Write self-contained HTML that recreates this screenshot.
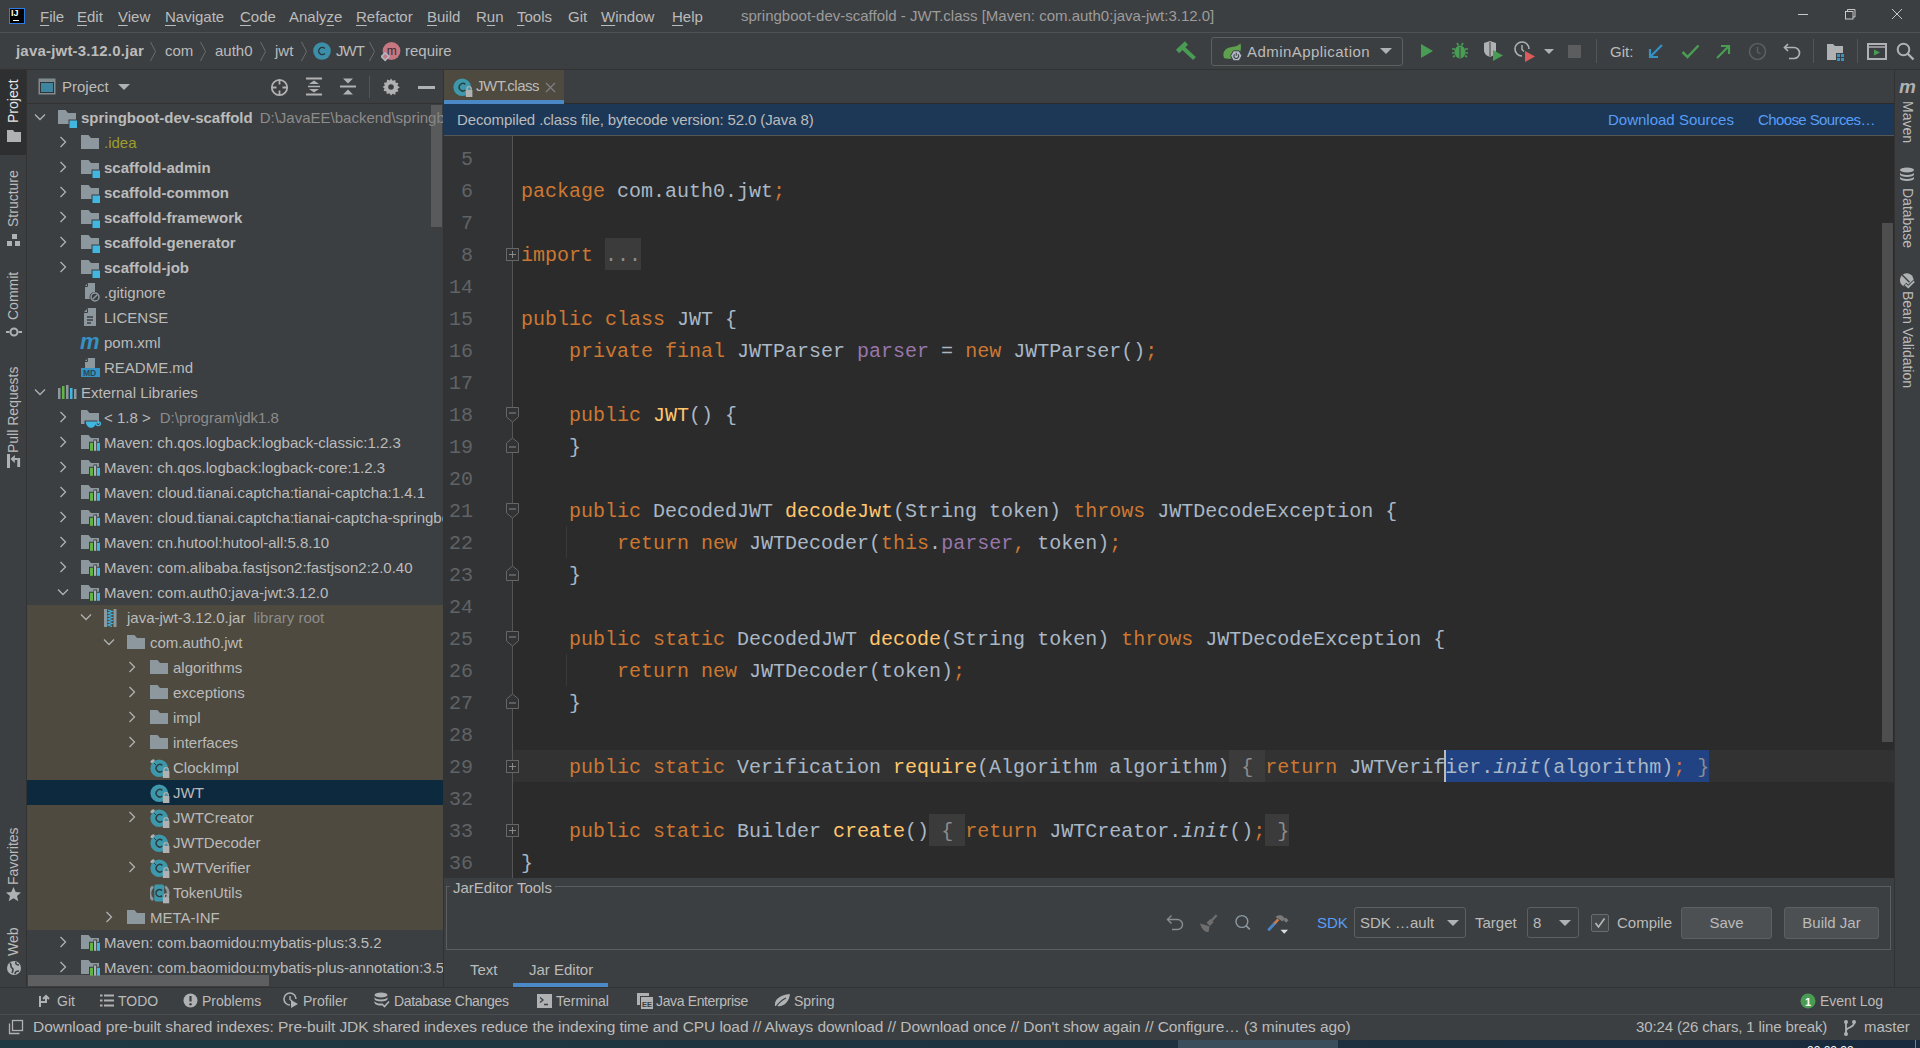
<!DOCTYPE html>
<html><head><meta charset="utf-8">
<style>
*{box-sizing:border-box;margin:0;padding:0}
html,body{width:1920px;height:1048px;overflow:hidden;background:#3C3F41}
body{position:relative;font-family:"Liberation Sans",sans-serif;font-size:15px;color:#BBBBBB}
.a{position:absolute;white-space:nowrap}
.ul{text-decoration:underline;text-underline-offset:3px}
.code{font-family:"Liberation Mono",monospace;font-size:20px;line-height:32px}
.k{color:#CC7832}.t{color:#A9B7C6}.f{color:#FFC66D}.v{color:#9876AA}.i{font-style:italic}
.ln{position:absolute;left:443px;width:30px;text-align:right;font-family:"Liberation Mono",monospace;font-size:20px;line-height:32px;color:#606366}
.cl{position:absolute;left:521px;font-family:"Liberation Mono",monospace;font-size:20px;line-height:32px;color:#A9B7C6;white-space:pre}
.tr{position:absolute;height:25px;line-height:25px;white-space:nowrap;color:#BBBBBB}
</style></head><body>

<!-- MENU BAR -->
<div class="a" style="left:0;top:0;width:1920px;height:33px;background:#3C3F41;border-bottom:1px solid #4E5254"></div>
<div class="a" style="left:9px;top:8px;width:16px;height:16px;background:#000;border:1px solid #2F7BE6"></div>
<div class="a" style="left:11px;top:7px;font-size:9px;font-weight:bold;color:#fff;line-height:12px">IJ</div>
<div class="a" style="left:13px;top:20px;width:6px;height:1px;background:#fff"></div>
<div id="menu">
<div class="a" style="left:40px;top:1px;line-height:32px"><span class="ul">F</span>ile</div>
<div class="a" style="left:77px;top:1px;line-height:32px"><span class="ul">E</span>dit</div>
<div class="a" style="left:118px;top:1px;line-height:32px"><span class="ul">V</span>iew</div>
<div class="a" style="left:165px;top:1px;line-height:32px"><span class="ul">N</span>avigate</div>
<div class="a" style="left:240px;top:1px;line-height:32px"><span class="ul">C</span>ode</div>
<div class="a" style="left:289px;top:1px;line-height:32px">Analy<span class="ul">z</span>e</div>
<div class="a" style="left:356px;top:1px;line-height:32px"><span class="ul">R</span>efactor</div>
<div class="a" style="left:427px;top:1px;line-height:32px"><span class="ul">B</span>uild</div>
<div class="a" style="left:476px;top:1px;line-height:32px">R<span class="ul">u</span>n</div>
<div class="a" style="left:517px;top:1px;line-height:32px"><span class="ul">T</span>ools</div>
<div class="a" style="left:568px;top:1px;line-height:32px">Git</div>
<div class="a" style="left:601px;top:1px;line-height:32px"><span class="ul">W</span>indow</div>
<div class="a" style="left:672px;top:1px;line-height:32px"><span class="ul">H</span>elp</div>
</div>
<div class="a" style="left:741px;top:0px;line-height:32px;color:#9C9C9C">springboot-dev-scaffold - JWT.class [Maven: com.auth0:java-jwt:3.12.0]</div>


<svg width="0" height="0" style="position:absolute">
<defs>
<symbol id="chr" viewBox="0 0 16 16"><polyline points="5.5,3 10.5,8 5.5,13" fill="none" stroke="#AFB1B3" stroke-width="1.3"/></symbol>
<symbol id="chd" viewBox="0 0 16 16"><polyline points="3,5.5 8,10.5 13,5.5" fill="none" stroke="#AFB1B3" stroke-width="1.3"/></symbol>
<symbol id="fold" viewBox="0 0 18 14"><path d="M0 0H7.5L10 3H18V14H0Z" fill="#8C979E"/></symbol>
<symbol id="modf" viewBox="0 0 20 18"><path d="M0 0H7.5L10 3H18V14H0Z" fill="#8C979E"/><rect x="10.5" y="9.5" width="9" height="9" fill="#3C3F41"/><rect x="11.5" y="10.5" width="7.5" height="7.5" fill="#40B6E0"/></symbol>
<symbol id="libf" viewBox="0 0 20 18"><path d="M0 0H7.5L10 3H18V14H0Z" fill="#8C979E"/><path d="M8 6.8H12.5V4.5H16V6.8H20V17H8Z" fill="#3C3F41"/><rect x="9" y="7.8" width="3" height="8" fill="#62B543"/><rect x="13" y="5.5" width="2.2" height="10.3" fill="#A7B3BA"/><rect x="16" y="7.8" width="3" height="8" fill="#40B6E0"/></symbol>
<symbol id="cls" viewBox="0 0 20 20"><circle cx="9.2" cy="9.2" r="8.8" fill="#3E98AB"/><path d="M12.3 6.4A3.7 3.7 0 1 0 12.3 12" fill="none" stroke="#2B3D42" stroke-width="1.5"/><path d="M14 12.3v-1.6a2.1 2.1 0 0 1 4.2 0v1.6" fill="none" stroke="#AFB1B3" stroke-width="1.3"/><rect x="12.9" y="12" width="6.5" height="7" fill="#AFB1B3"/></symbol>
<symbol id="clsa" viewBox="0 0 20 20"><circle cx="9.2" cy="9.2" r="8.8" fill="#3E98AB"/><ellipse cx="2.6" cy="2.2" rx="2.4" ry="1.5" transform="rotate(-40 2.6 2.2)" fill="#AFB1B3"/><path d="M4.2 4.2L6.2 6.2" stroke="#2B3D42" stroke-width="1"/><path d="M12.3 6.4A3.7 3.7 0 1 0 12.3 12" fill="none" stroke="#2B3D42" stroke-width="1.5"/><rect x="11.6" y="11" width="8.4" height="9" fill="#3E98AB" opacity="0"/><path d="M14 12.3v-1.6a2.1 2.1 0 0 1 4.2 0v1.6" fill="none" stroke="#AFB1B3" stroke-width="1.3"/><rect x="12.9" y="12" width="6.5" height="7" fill="#AFB1B3"/></symbol>
</defs></svg>

<!-- NAV BAR -->
<div class="a" style="left:0;top:33px;width:1920px;height:37px;background:#3C3F41;border-bottom:1px solid #323232"></div>
<div class="a" style="left:16px;top:33px;line-height:35px;font-weight:bold;letter-spacing:0.2px">java-jwt-3.12.0.jar</div>
<svg class="a" style="left:147px;top:41px" width="12" height="21"><polyline points="3.5,1 8.5,10.5 3.5,20" fill="none" stroke="#6A6C6E" stroke-width="1"/></svg>
<div class="a" style="left:165px;top:33px;line-height:35px">com</div>
<svg class="a" style="left:197px;top:41px" width="12" height="21"><polyline points="3.5,1 8.5,10.5 3.5,20" fill="none" stroke="#6A6C6E" stroke-width="1"/></svg>
<div class="a" style="left:215px;top:33px;line-height:35px">auth0</div>
<svg class="a" style="left:257px;top:41px" width="12" height="21"><polyline points="3.5,1 8.5,10.5 3.5,20" fill="none" stroke="#6A6C6E" stroke-width="1"/></svg>
<div class="a" style="left:275px;top:33px;line-height:35px">jwt</div>
<svg class="a" style="left:298px;top:41px" width="12" height="21"><polyline points="3.5,1 8.5,10.5 3.5,20" fill="none" stroke="#6A6C6E" stroke-width="1"/></svg>
<svg class="a" style="left:313px;top:42px" width="18" height="18"><circle cx="9" cy="9" r="8.8" fill="#3D8EA8"/><path d="M11.8 6.4A3.6 3.6 0 1 0 11.8 11.6" fill="none" stroke="#273A40" stroke-width="1.4"/></svg>
<div class="a" style="left:336px;top:33px;line-height:35px;letter-spacing:-0.9px">JWT</div>
<svg class="a" style="left:366px;top:41px" width="12" height="21"><polyline points="3.5,1 8.5,10.5 3.5,20" fill="none" stroke="#6A6C6E" stroke-width="1"/></svg>
<svg class="a" style="left:381px;top:41px" width="21" height="21"><circle cx="10.5" cy="10" r="8.9" fill="#C57782"/><text x="10.8" y="14.2" font-size="12" text-anchor="middle" fill="#3A2A2E" font-family="Liberation Sans">m</text><path d="M4.2 11.8L8 15.6L4.2 19.4L0.4 15.6Z" fill="#C57782" stroke="#AFB9C3" stroke-width="1.6"/></svg>
<div class="a" style="left:405px;top:33px;line-height:35px">require</div>


<div class="a" style="left:1798px;top:14px;width:10px;height:1px;background:#C8C8C8"></div>
<svg class="a" style="left:1844px;top:8px" width="14" height="14"><rect x="1.5" y="3.5" width="7.5" height="7.5" fill="none" stroke="#C8C8C8" stroke-width="1"/><path d="M3.5 3.5V1.5H11V9H9" fill="none" stroke="#C8C8C8" stroke-width="1"/></svg>
<svg class="a" style="left:1891px;top:8px" width="12" height="12"><path d="M1 1L11 11M11 1L1 11" stroke="#C8C8C8" stroke-width="1"/></svg>
<svg class="a" style="left:1174px;top:40px" width="22" height="22"><path d="M3.5 11.5L12.5 3" stroke="#499C54" stroke-width="4.5"/><path d="M8 7L20.5 18.5" stroke="#499C54" stroke-width="4"/></svg>
<div class="a" style="left:1211px;top:37px;width:192px;height:29px;border:1px solid #5E6060;border-radius:3px"></div>
<svg class="a" style="left:1222px;top:42px" width="22" height="20"><path d="M2 16C0 10 3 6 10 5C14 4.5 17 3 18.5 1.5C19.5 6 19 11 15 14C11 17 5 17.5 2 16Z" fill="#5FA04E"/><path d="M19.9 13.8L17.1 18.8H11.4L8.6 13.8L11.4 8.8H17.1Z" fill="#AFB9C3" stroke="#3C3F41" stroke-width="1"/><path d="M12.6 12.3A2.4 2.4 0 1 0 15.9 12.3" fill="none" stroke="#3C3F41" stroke-width="1.1"/><path d="M14.25 10.8V13.8" stroke="#3C3F41" stroke-width="1.1"/></svg>
<div class="a" style="left:1247px;top:37px;line-height:29px;letter-spacing:0.45px;color:#BBBBBB">AdminApplication</div>
<svg class="a" style="left:1379px;top:47px" width="14" height="9"><path d="M1 1H13L7 7Z" fill="#AFB1B3"/></svg>
<svg class="a" style="left:1419px;top:42px" width="16" height="18"><path d="M2 2L14 9L2 16Z" fill="#499C54"/></svg>
<svg class="a" style="left:1451px;top:41px" width="18" height="19"><path d="M6 2L7.5 4.5M12 2L10.5 4.5" stroke="#499C54" stroke-width="1.6"/><ellipse cx="9" cy="11" rx="5.5" ry="6.5" fill="#499C54"/><path d="M1 8H4M14 8H17M1 12H3.5M14.5 12H17M2 16L4 14.5M16 16L14 14.5" stroke="#499C54" stroke-width="1.6"/><path d="M9 6V17" stroke="#3C3F41" stroke-width="1"/></svg>
<svg class="a" style="left:1483px;top:41px" width="22" height="21"><path d="M1 2L7 0L13 2V9C13 13 10 15 7 16C4 15 1 13 1 9Z" fill="#AFB1B3"/><path d="M7 1V15.5" stroke="#3C3F41" stroke-width="1"/><path d="M10 9L20 14.5L10 20Z" fill="#499C54"/></svg>
<svg class="a" style="left:1514px;top:41px" width="22" height="21"><path d="M8 15A7 7 0 1 1 15 8" fill="none" stroke="#AFB1B3" stroke-width="1.6"/><path d="M8 4V8.5L10 10.5" fill="none" stroke="#AFB1B3" stroke-width="1.4"/><path d="M11 10L21 15.5L11 21Z" fill="#DB5C5C"/></svg>
<svg class="a" style="left:1543px;top:48px" width="12" height="8"><path d="M1 1H11L6 6Z" fill="#AFB1B3"/></svg>
<div class="a" style="left:1568px;top:45px;width:13px;height:13px;background:#5B5D5F"></div>
<div class="a" style="left:1596px;top:39px;width:1px;height:24px;background:#515658"></div>
<div class="a" style="left:1610px;top:37px;line-height:29px;color:#BBBBBB">Git:</div>
<svg class="a" style="left:1647px;top:43px" width="17" height="17"><path d="M15 2L3 14M3 6V14H11" fill="none" stroke="#3592C4" stroke-width="2.2"/></svg>
<svg class="a" style="left:1681px;top:43px" width="19" height="17"><path d="M1.5 9L6.5 14L17.5 2.5" fill="none" stroke="#499C54" stroke-width="2.5"/></svg>
<svg class="a" style="left:1715px;top:43px" width="17" height="17"><path d="M2 15L14 3M6 3H14V11" fill="none" stroke="#499C54" stroke-width="2.2"/></svg>
<svg class="a" style="left:1748px;top:42px" width="19" height="19"><circle cx="9.5" cy="9.5" r="8" fill="none" stroke="#5B5D5F" stroke-width="1.6"/><path d="M9.5 5V10L12.5 12" fill="none" stroke="#5B5D5F" stroke-width="1.5"/></svg>
<svg class="a" style="left:1783px;top:42px" width="19" height="19"><path d="M5 2L1.5 5.5L5 9" fill="none" stroke="#AFB1B3" stroke-width="1.7"/><path d="M2 5.5H11A5.5 5.5 0 0 1 11 16.5H6" fill="none" stroke="#AFB1B3" stroke-width="1.7"/></svg>
<div class="a" style="left:1813px;top:39px;width:1px;height:24px;background:#515658"></div>
<svg class="a" style="left:1826px;top:43px" width="20" height="18"><path d="M1 1H7L9 3H17V10H10V17H1Z" fill="#AFB1B3"/><rect x="11" y="11" width="3" height="3" fill="#3592C4"/><rect x="15" y="11" width="3" height="3" fill="#3592C4"/><rect x="11" y="15" width="3" height="3" fill="#3592C4"/><rect x="15" y="15" width="3" height="3" fill="#3592C4"/></svg>
<div class="a" style="left:1857px;top:39px;width:1px;height:24px;background:#515658"></div>
<svg class="a" style="left:1867px;top:43px" width="20" height="17"><rect x="1" y="1" width="18" height="15" fill="none" stroke="#AFB1B3" stroke-width="2"/><path d="M1 4H19" stroke="#AFB1B3" stroke-width="1.5"/><path d="M7 6.5L13 9.5L7 12.5Z" fill="#499C54"/></svg>
<svg class="a" style="left:1896px;top:42px" width="19" height="19"><circle cx="7.5" cy="7.5" r="5.8" fill="none" stroke="#AFB1B3" stroke-width="2"/><path d="M11.5 11.5L17.5 17.5" stroke="#AFB1B3" stroke-width="2.4"/></svg>
<div class="a" style="left:0;top:70px;width:27px;height:917px;background:#3C3F41;border-right:1px solid #323232"></div>
<div class="a" style="left:0;top:70px;width:26px;height:85px;background:#2D2F30"></div>
<div class="a" style="left:5px;top:123px;transform-origin:0 0;transform:rotate(-90deg);font-size:14px;line-height:16px;color:#E6E6E6">Project</div>
<svg class="a" style="left:6px;top:128px" width="16" height="16"><path d="M1 2H7L8.5 4H15V14H1Z" fill="#AFB1B3"/></svg>
<div class="a" style="left:5px;top:227px;transform-origin:0 0;transform:rotate(-90deg);font-size:14px;line-height:16px;color:#BBBBBB">Structure</div>
<svg class="a" style="left:6px;top:232px" width="16" height="16"><rect x="6" y="2" width="5" height="5" fill="#AFB1B3"/><rect x="1" y="9" width="5" height="5" fill="#AFB1B3"/><rect x="9" y="9" width="5" height="5" fill="#AFB1B3"/></svg>
<div class="a" style="left:5px;top:320px;transform-origin:0 0;transform:rotate(-90deg);font-size:14px;line-height:16px;color:#BBBBBB">Commit</div>
<svg class="a" style="left:6px;top:324px" width="16" height="16"><circle cx="8" cy="8" r="3.5" fill="none" stroke="#AFB1B3" stroke-width="2"/><rect x="0" y="7" width="3.5" height="2" fill="#AFB1B3"/><rect x="12.5" y="7" width="3.5" height="2" fill="#AFB1B3"/></svg>
<div class="a" style="left:5px;top:453px;transform-origin:0 0;transform:rotate(-90deg);font-size:14px;line-height:16px;color:#BBBBBB">Pull Requests</div>
<svg class="a" style="left:0;top:450px" width="26" height="22"><rect x="7" y="4" width="3" height="14" fill="#AFB1B3"/><path d="M10.5 9L14.8 5V13Z" fill="#AFB1B3"/><rect x="14.5" y="8" width="3" height="2" fill="#AFB1B3"/><rect x="17.3" y="8" width="2.8" height="9" fill="#AFB1B3"/></svg>
<div class="a" style="left:5px;top:885px;transform-origin:0 0;transform:rotate(-90deg);font-size:14px;line-height:16px;color:#BBBBBB">Favorites</div>
<svg class="a" style="left:5px;top:886px" width="17" height="17"><path d="M8.5 1l2.2 5 5.3.4-4 3.5 1.3 5.3-4.8-2.9-4.8 2.9 1.3-5.3-4-3.5 5.3-.4z" fill="#AFB1B3"/></svg>
<div class="a" style="left:5px;top:956px;transform-origin:0 0;transform:rotate(-90deg);font-size:14px;line-height:16px;color:#BBBBBB">Web</div>
<svg class="a" style="left:6px;top:960px" width="16" height="16"><circle cx="8" cy="8" r="7" fill="#AFB1B3"/><path d="M4 3c2 2 0 4 2 5s1 3 0 5M10 2c-1 2 1 3 3 3M9 14c0-2 2-3 4-3" fill="none" stroke="#3C3F41" stroke-width="1.6"/></svg>
<div class="a" style="left:27px;top:70px;width:416px;height:34px;background:#3C3F41;border-bottom:1px solid #323232"></div>
<svg class="a" style="left:38px;top:78px" width="18" height="17"><rect x="0.5" y="0.5" width="17" height="16" fill="#7F8B91"/><rect x="2" y="4" width="14" height="11" fill="#2F3436"/><rect x="3" y="5" width="12" height="9" fill="#3E86A0"/></svg>
<div class="a" style="left:62px;top:70px;line-height:33px;font-size:15px">Project</div>
<svg class="a" style="left:117px;top:82px" width="14" height="10"><path d="M1 2H13L7 8Z" fill="#AFB1B3"/></svg>
<svg class="a" style="left:270px;top:78px" width="19" height="19"><circle cx="9.5" cy="9.5" r="7.7" fill="none" stroke="#AFB1B3" stroke-width="1.8"/><path d="M9.5 2v4.5M9.5 12.5v4.5M2 9.5h4.5M12.5 9.5h4.5" stroke="#AFB1B3" stroke-width="1.8"/></svg>
<svg class="a" style="left:305px;top:77px" width="18" height="19"><path d="M1 1.5H17M1 17.5H17" stroke="#AFB1B3" stroke-width="2"/><path d="M4 7L9 3.5L14 7ZM4 12L9 15.5L14 12Z" fill="#AFB1B3"/><path d="M3 9.5H15" stroke="#AFB1B3" stroke-width="1.5"/></svg>
<svg class="a" style="left:339px;top:77px" width="18" height="19"><path d="M1 9.5H17" stroke="#AFB1B3" stroke-width="2"/><path d="M4 1.5L9 6.5L14 1.5ZM4 17.5L9 12.5L14 17.5Z" fill="#AFB1B3"/></svg>
<div class="a" style="left:369px;top:76px;width:1px;height:22px;background:#515658"></div>
<svg class="a" style="left:382px;top:78px" width="18" height="18"><path d="M9 0.5l1.6 2.3 2.7-.9.3 2.8 2.8.3-.9 2.7 2.3 1.6-2.3 1.6.9 2.7-2.8.3-.3 2.8-2.7-.9L9 17.5l-1.6-2.3-2.7.9-.3-2.8-2.8-.3.9-2.7L.5 9l2.3-1.6-.9-2.7 2.8-.3.3-2.8 2.7.9z" fill="#AFB1B3"/><circle cx="9" cy="9" r="2.8" fill="#3C3F41"/></svg>
<div class="a" style="left:418px;top:86px;width:17px;height:3px;background:#AFB1B3"></div>
<div class="a" style="left:27px;top:104px;width:416px;height:883px;background:#3C3F41"></div>
<div class="a" style="left:27px;top:605px;width:416px;height:325px;background:#4E4A3F"></div>
<div class="a" style="left:27px;top:780px;width:416px;height:25px;background:#0D293E"></div>
<div style="position:absolute;left:0;top:0;width:443px;height:987px;overflow:hidden">
<svg class="a" style="left:32px;top:109px" width="16" height="16"><use href="#chd"/></svg>
<svg class="a" style="left:58px;top:110px" width="20" height="18"><use href="#modf"/></svg>
<div class="tr" style="left:81px;top:105px;font-weight:bold">springboot-dev-scaffold<span style="font-weight:normal;color:#8C8C8C;margin-left:7px">D:\JavaEE\backend\springboot-dev-scaffold</span></div>
<svg class="a" style="left:55px;top:134px" width="16" height="16"><use href="#chr"/></svg>
<svg class="a" style="left:81px;top:135px" width="18" height="14"><use href="#fold"/></svg>
<div class="tr" style="left:104px;top:130px;color:#9E9D2C">.idea</div>
<svg class="a" style="left:55px;top:159px" width="16" height="16"><use href="#chr"/></svg>
<svg class="a" style="left:81px;top:160px" width="20" height="18"><use href="#modf"/></svg>
<div class="tr" style="left:104px;top:155px;font-weight:bold">scaffold-admin</div>
<svg class="a" style="left:55px;top:184px" width="16" height="16"><use href="#chr"/></svg>
<svg class="a" style="left:81px;top:185px" width="20" height="18"><use href="#modf"/></svg>
<div class="tr" style="left:104px;top:180px;font-weight:bold">scaffold-common</div>
<svg class="a" style="left:55px;top:209px" width="16" height="16"><use href="#chr"/></svg>
<svg class="a" style="left:81px;top:210px" width="20" height="18"><use href="#modf"/></svg>
<div class="tr" style="left:104px;top:205px;font-weight:bold">scaffold-framework</div>
<svg class="a" style="left:55px;top:234px" width="16" height="16"><use href="#chr"/></svg>
<svg class="a" style="left:81px;top:235px" width="20" height="18"><use href="#modf"/></svg>
<div class="tr" style="left:104px;top:230px;font-weight:bold">scaffold-generator</div>
<svg class="a" style="left:55px;top:259px" width="16" height="16"><use href="#chr"/></svg>
<svg class="a" style="left:81px;top:260px" width="20" height="18"><use href="#modf"/></svg>
<div class="tr" style="left:104px;top:255px;font-weight:bold">scaffold-job</div>
<svg class="a" style="left:83px;top:283px" width="18" height="19"><path d="M2 3L5 0H12V9A5 5 0 0 0 7 16H2Z" fill="#8C979E"/><path d="M4.5 0.5V3.5H1.5" fill="none" stroke="#3C3F41" stroke-width="1"/><circle cx="12" cy="14" r="4" fill="none" stroke="#8C979E" stroke-width="1.5"/><path d="M9.5 16.5L14.5 11.5" stroke="#8C979E" stroke-width="1.5"/></svg>
<div class="tr" style="left:104px;top:280px">.gitignore</div>
<svg class="a" style="left:83px;top:308px" width="16" height="19"><path d="M1 4L5 0H13V18H1Z" fill="#8C979E"/><path d="M4.5 0.5V4.5H0.5" fill="none" stroke="#3C3F41" stroke-width="1"/><path d="M4 9H10M4 12H10M4 15H8" stroke="#3C3F41" stroke-width="1.3"/></svg>
<div class="tr" style="left:104px;top:305px">LICENSE</div>
<div class="a" style="left:80px;top:329px;font-size:22px;line-height:25px;font-weight:bold;font-style:italic;color:#3592C4;font-family:&quot;Liberation Sans&quot;">m</div>
<div class="tr" style="left:104px;top:330px">pom.xml</div>
<svg class="a" style="left:81px;top:358px" width="20" height="19"><path d="M4 3L7 0H14V10H4Z" fill="#8C979E"/><path d="M6.5 0.5V3.5H3.5" fill="none" stroke="#3C3F41" stroke-width="1"/><rect x="0" y="10" width="19" height="9" fill="#3592C4"/><text x="2" y="18" font-size="8.5" font-weight="bold" fill="#2B4656" font-family="Liberation Sans">MD</text></svg>
<div class="tr" style="left:104px;top:355px">README.md</div>
<svg class="a" style="left:32px;top:384px" width="16" height="16"><use href="#chd"/></svg>
<svg class="a" style="left:58px;top:385px" width="20" height="16"><rect x="0" y="3" width="2.5" height="11" fill="#8C979E"/><rect x="4" y="1" width="2.5" height="13" fill="#62B543"/><rect x="8" y="0" width="2.5" height="14" fill="#8C979E"/><rect x="12" y="3" width="2.5" height="11" fill="#40B6E0"/><rect x="16" y="4" width="2.5" height="10" fill="#8C979E"/></svg>
<div class="tr" style="left:81px;top:380px">External Libraries</div>
<svg class="a" style="left:55px;top:409px" width="16" height="16"><use href="#chr"/></svg>
<svg class="a" style="left:81px;top:410px" width="22" height="19"><path d="M0 0H6L8.5 3H18V14H0Z" fill="#8C979E"/><path d="M3.5 10.5H16.5V15H3.5Z" fill="#3C3F41"/><path d="M4.8 11.5H15.2C15 15.5 12.5 17.8 10 17.8C7.5 17.8 5 15.5 4.8 11.5Z" fill="#40B6E0"/><ellipse cx="17.2" cy="13.8" rx="2.3" ry="1.8" fill="none" stroke="#40B6E0" stroke-width="1.3"/></svg>
<div class="tr" style="left:104px;top:405px">&lt; 1.8 &gt;<span style="color:#8C8C8C;margin-left:9px">D:\program\jdk1.8</span></div>
<svg class="a" style="left:55px;top:434px" width="16" height="16"><use href="#chr"/></svg>
<svg class="a" style="left:81px;top:435px" width="20" height="18"><use href="#libf"/></svg>
<div class="tr" style="left:104px;top:430px">Maven: ch.qos.logback:logback-classic:1.2.3</div>
<svg class="a" style="left:55px;top:459px" width="16" height="16"><use href="#chr"/></svg>
<svg class="a" style="left:81px;top:460px" width="20" height="18"><use href="#libf"/></svg>
<div class="tr" style="left:104px;top:455px">Maven: ch.qos.logback:logback-core:1.2.3</div>
<svg class="a" style="left:55px;top:484px" width="16" height="16"><use href="#chr"/></svg>
<svg class="a" style="left:81px;top:485px" width="20" height="18"><use href="#libf"/></svg>
<div class="tr" style="left:104px;top:480px">Maven: cloud.tianai.captcha:tianai-captcha:1.4.1</div>
<svg class="a" style="left:55px;top:509px" width="16" height="16"><use href="#chr"/></svg>
<svg class="a" style="left:81px;top:510px" width="20" height="18"><use href="#libf"/></svg>
<div class="tr" style="left:104px;top:505px">Maven: cloud.tianai.captcha:tianai-captcha-springboot-starter:1.4.1</div>
<svg class="a" style="left:55px;top:534px" width="16" height="16"><use href="#chr"/></svg>
<svg class="a" style="left:81px;top:535px" width="20" height="18"><use href="#libf"/></svg>
<div class="tr" style="left:104px;top:530px">Maven: cn.hutool:hutool-all:5.8.10</div>
<svg class="a" style="left:55px;top:559px" width="16" height="16"><use href="#chr"/></svg>
<svg class="a" style="left:81px;top:560px" width="20" height="18"><use href="#libf"/></svg>
<div class="tr" style="left:104px;top:555px">Maven: com.alibaba.fastjson2:fastjson2:2.0.40</div>
<svg class="a" style="left:55px;top:584px" width="16" height="16"><use href="#chd"/></svg>
<svg class="a" style="left:81px;top:585px" width="20" height="18"><use href="#libf"/></svg>
<div class="tr" style="left:104px;top:580px">Maven: com.auth0:java-jwt:3.12.0</div>
<svg class="a" style="left:78px;top:609px" width="16" height="16"><use href="#chd"/></svg>
<svg class="a" style="left:104px;top:609px" width="14" height="18"><rect x="0" y="0" width="3" height="18" fill="#8C979E"/><rect x="9.5" y="0" width="3" height="18" fill="#8C979E"/><polyline points="4,1 8,2.5 4,4 8,5.5 4,7 8,8.5 4,10 8,11.5 4,13 8,14.5 4,16 8,17.5" fill="none" stroke="#40B6E0" stroke-width="1.2"/></svg>
<div class="tr" style="left:127px;top:605px">java-jwt-3.12.0.jar<span style="color:#8C8C8C;margin-left:8px">library root</span></div>
<svg class="a" style="left:101px;top:634px" width="16" height="16"><use href="#chd"/></svg>
<svg class="a" style="left:127px;top:635px" width="18" height="14"><use href="#fold"/></svg>
<div class="tr" style="left:150px;top:630px">com.auth0.jwt</div>
<svg class="a" style="left:124px;top:659px" width="16" height="16"><use href="#chr"/></svg>
<svg class="a" style="left:150px;top:660px" width="18" height="14"><use href="#fold"/></svg>
<div class="tr" style="left:173px;top:655px">algorithms</div>
<svg class="a" style="left:124px;top:684px" width="16" height="16"><use href="#chr"/></svg>
<svg class="a" style="left:150px;top:685px" width="18" height="14"><use href="#fold"/></svg>
<div class="tr" style="left:173px;top:680px">exceptions</div>
<svg class="a" style="left:124px;top:709px" width="16" height="16"><use href="#chr"/></svg>
<svg class="a" style="left:150px;top:710px" width="18" height="14"><use href="#fold"/></svg>
<div class="tr" style="left:173px;top:705px">impl</div>
<svg class="a" style="left:124px;top:734px" width="16" height="16"><use href="#chr"/></svg>
<svg class="a" style="left:150px;top:735px" width="18" height="14"><use href="#fold"/></svg>
<div class="tr" style="left:173px;top:730px">interfaces</div>
<svg class="a" style="left:150px;top:759px" width="20" height="20"><use href="#clsa"/></svg>
<div class="tr" style="left:173px;top:755px">ClockImpl</div>
<svg class="a" style="left:150px;top:784px" width="20" height="20"><use href="#cls"/></svg>
<div class="tr" style="left:173px;top:780px">JWT</div>
<svg class="a" style="left:124px;top:809px" width="16" height="16"><use href="#chr"/></svg>
<svg class="a" style="left:150px;top:809px" width="20" height="20"><use href="#clsa"/></svg>
<div class="tr" style="left:173px;top:805px">JWTCreator</div>
<svg class="a" style="left:150px;top:834px" width="20" height="20"><use href="#clsa"/></svg>
<div class="tr" style="left:173px;top:830px">JWTDecoder</div>
<svg class="a" style="left:124px;top:859px" width="16" height="16"><use href="#chr"/></svg>
<svg class="a" style="left:150px;top:859px" width="20" height="20"><use href="#clsa"/></svg>
<div class="tr" style="left:173px;top:855px">JWTVerifier</div>
<svg class="a" style="left:150px;top:884px" width="20" height="20"><path d="M3 2.5A9 9 0 0 0 3 16M15.2 2.5A9 9 0 0 1 15.2 16" fill="none" stroke="#8C979E" stroke-width="2.6"/><rect x="4.3" y="0.5" width="9.8" height="17" rx="1.8" fill="#3E98AB"/><path d="M12 6.6A3.5 3.5 0 1 0 12 11.6" fill="none" stroke="#2B3D42" stroke-width="1.5"/><path d="M14.2 13.5v-1.6a2 2 0 0 1 4 0v1.6" fill="none" stroke="#AFB1B3" stroke-width="1.3"/><rect x="13" y="13.3" width="6.2" height="6" fill="#AFB1B3"/></svg>
<div class="tr" style="left:173px;top:880px">TokenUtils</div>
<svg class="a" style="left:101px;top:909px" width="16" height="16"><use href="#chr"/></svg>
<svg class="a" style="left:127px;top:910px" width="18" height="14"><use href="#fold"/></svg>
<div class="tr" style="left:150px;top:905px">META-INF</div>
<svg class="a" style="left:55px;top:934px" width="16" height="16"><use href="#chr"/></svg>
<svg class="a" style="left:81px;top:935px" width="20" height="18"><use href="#libf"/></svg>
<div class="tr" style="left:104px;top:930px">Maven: com.baomidou:mybatis-plus:3.5.2</div>
<svg class="a" style="left:55px;top:959px" width="16" height="16"><use href="#chr"/></svg>
<svg class="a" style="left:81px;top:960px" width="20" height="18"><use href="#libf"/></svg>
<div class="tr" style="left:104px;top:955px">Maven: com.baomidou:mybatis-plus-annotation:3.5.2</div>
</div>
<div class="a" style="left:431px;top:105px;width:11px;height:122px;background:rgba(125,125,125,0.45)"></div>
<div class="a" style="left:443px;top:70px;width:1px;height:917px;background:#323232"></div>
<div class="a" style="left:444px;top:70px;width:1450px;height:34px;background:#3C3F41"></div>
<div class="a" style="left:444px;top:103px;width:1450px;height:1px;background:#2B2B2B"></div>
<div class="a" style="left:444px;top:70px;width:120px;height:30px;background:#4E4A3F"></div>
<div class="a" style="left:444px;top:100px;width:120px;height:4px;background:#4A88C7"></div>
<svg class="a" style="left:453px;top:78px" width="20" height="20"><use href="#cls"/></svg>
<div class="a" style="left:476px;top:70px;line-height:31px;letter-spacing:-0.5px;color:#BBBBBB">JWT.class</div>
<svg class="a" style="left:545px;top:82px" width="11" height="11"><path d="M1 1L10 10M10 1L1 10" stroke="#7E8183" stroke-width="1.2"/></svg>
<div class="a" style="left:444px;top:104px;width:1450px;height:31px;background:#1D3857"></div>
<div class="a" style="left:444px;top:135px;width:1450px;height:1px;background:#555555"></div>
<div class="a" style="left:457px;top:104px;line-height:31px;letter-spacing:-0.11px;color:#BBBBBB">Decompiled .class file, bytecode version: 52.0 (Java 8)</div>
<div class="a" style="left:1608px;top:104px;line-height:31px;color:#589DF6">Download Sources</div>
<div class="a" style="left:1758px;top:104px;line-height:31px;letter-spacing:-0.6px;color:#589DF6">Choose Sources…</div>
<div class="a" style="left:444px;top:136px;width:1450px;height:742px;background:#2B2B2B"></div>
<div class="a" style="left:444px;top:136px;width:69px;height:742px;background:#313335"></div>
<div class="a" style="left:513px;top:750px;width:1381px;height:32px;background:#323232"></div>
<div class="a" style="left:512px;top:136px;width:1px;height:742px;background:#555555"></div>
<div class="a" style="left:566px;top:526px;width:1px;height:32px;background:#393B3B"></div>
<div class="a" style="left:566px;top:654px;width:1px;height:32px;background:#393B3B"></div>
<div class="a" style="left:1882px;top:223px;width:11px;height:519px;background:#4E4E4E"></div>
<div class="ln" style="top:144px">5</div>
<div class="ln" style="top:176px">6</div>
<div class="cl" style="top:176px"><span style="color:#CC7832">package</span><span style="color:#A9B7C6"> com.auth0.jwt</span><span style="color:#CC7832">;</span></div>
<div class="ln" style="top:208px">7</div>
<div class="ln" style="top:240px">8</div>
<div class="a" style="left:605px;top:238px;width:36px;height:32px;background:#3B3B3B"></div>
<div class="cl" style="top:240px"><span style="color:#CC7832">import</span><span style="color:#A9B7C6"> </span><span style="color:#8C8C8C">...</span></div>
<div class="ln" style="top:272px">14</div>
<div class="ln" style="top:304px">15</div>
<div class="cl" style="top:304px"><span style="color:#CC7832">public</span><span style="color:#A9B7C6"> </span><span style="color:#CC7832">class</span><span style="color:#A9B7C6"> JWT {</span></div>
<div class="ln" style="top:336px">16</div>
<div class="cl" style="top:336px"><span style="color:#A9B7C6">    </span><span style="color:#CC7832">private</span><span style="color:#A9B7C6"> </span><span style="color:#CC7832">final</span><span style="color:#A9B7C6"> JWTParser </span><span style="color:#9876AA">parser</span><span style="color:#A9B7C6"> = </span><span style="color:#CC7832">new</span><span style="color:#A9B7C6"> JWTParser()</span><span style="color:#CC7832">;</span></div>
<div class="ln" style="top:368px">17</div>
<div class="ln" style="top:400px">18</div>
<div class="cl" style="top:400px"><span style="color:#A9B7C6">    </span><span style="color:#CC7832">public</span><span style="color:#A9B7C6"> </span><span style="color:#FFC66D">JWT</span><span style="color:#A9B7C6">() {</span></div>
<div class="ln" style="top:432px">19</div>
<div class="cl" style="top:432px"><span style="color:#A9B7C6">    }</span></div>
<div class="ln" style="top:464px">20</div>
<div class="ln" style="top:496px">21</div>
<div class="cl" style="top:496px"><span style="color:#A9B7C6">    </span><span style="color:#CC7832">public</span><span style="color:#A9B7C6"> DecodedJWT </span><span style="color:#FFC66D">decodeJwt</span><span style="color:#A9B7C6">(String token) </span><span style="color:#CC7832">throws</span><span style="color:#A9B7C6"> JWTDecodeException {</span></div>
<div class="ln" style="top:528px">22</div>
<div class="cl" style="top:528px"><span style="color:#A9B7C6">        </span><span style="color:#CC7832">return</span><span style="color:#A9B7C6"> </span><span style="color:#CC7832">new</span><span style="color:#A9B7C6"> JWTDecoder(</span><span style="color:#CC7832">this</span><span style="color:#A9B7C6">.</span><span style="color:#9876AA">parser</span><span style="color:#CC7832">,</span><span style="color:#A9B7C6"> token)</span><span style="color:#CC7832">;</span></div>
<div class="ln" style="top:560px">23</div>
<div class="cl" style="top:560px"><span style="color:#A9B7C6">    }</span></div>
<div class="ln" style="top:592px">24</div>
<div class="ln" style="top:624px">25</div>
<div class="cl" style="top:624px"><span style="color:#A9B7C6">    </span><span style="color:#CC7832">public</span><span style="color:#A9B7C6"> </span><span style="color:#CC7832">static</span><span style="color:#A9B7C6"> DecodedJWT </span><span style="color:#FFC66D">decode</span><span style="color:#A9B7C6">(String token) </span><span style="color:#CC7832">throws</span><span style="color:#A9B7C6"> JWTDecodeException {</span></div>
<div class="ln" style="top:656px">26</div>
<div class="cl" style="top:656px"><span style="color:#A9B7C6">        </span><span style="color:#CC7832">return</span><span style="color:#A9B7C6"> </span><span style="color:#CC7832">new</span><span style="color:#A9B7C6"> JWTDecoder(token)</span><span style="color:#CC7832">;</span></div>
<div class="ln" style="top:688px">27</div>
<div class="cl" style="top:688px"><span style="color:#A9B7C6">    }</span></div>
<div class="ln" style="top:720px">28</div>
<div class="ln" style="top:752px">29</div>
<div class="a" style="left:1229px;top:750px;width:36px;height:32px;background:#3B3B3B"></div>
<div class="a" style="left:1685px;top:750px;width:24px;height:32px;background:#3B3B3B"></div>
<div class="a" style="left:1445px;top:750px;width:264px;height:32px;background:#214283"></div>
<div class="cl" style="top:752px"><span style="color:#A9B7C6">    </span><span style="color:#CC7832">public</span><span style="color:#A9B7C6"> </span><span style="color:#CC7832">static</span><span style="color:#A9B7C6"> Verification </span><span style="color:#FFC66D">require</span><span style="color:#A9B7C6">(Algorithm algorithm)</span><span style="color:#8C8C8C"> { </span><span style="color:#CC7832">return</span><span style="color:#A9B7C6"> JWTVerifier.</span><span style="color:#A9B7C6;font-style:italic">init</span><span style="color:#A9B7C6">(algorithm)</span><span style="color:#CC7832">;</span><span style="color:#8C8C8C"> }</span></div>
<div class="ln" style="top:784px">32</div>
<div class="ln" style="top:816px">33</div>
<div class="a" style="left:929px;top:814px;width:36px;height:32px;background:#3B3B3B"></div>
<div class="a" style="left:1265px;top:814px;width:24px;height:32px;background:#3B3B3B"></div>
<div class="cl" style="top:816px"><span style="color:#A9B7C6">    </span><span style="color:#CC7832">public</span><span style="color:#A9B7C6"> </span><span style="color:#CC7832">static</span><span style="color:#A9B7C6"> Builder </span><span style="color:#FFC66D">create</span><span style="color:#A9B7C6">()</span><span style="color:#8C8C8C"> { </span><span style="color:#CC7832">return</span><span style="color:#A9B7C6"> JWTCreator.</span><span style="color:#A9B7C6;font-style:italic">init</span><span style="color:#A9B7C6">()</span><span style="color:#CC7832">;</span><span style="color:#8C8C8C"> }</span></div>
<div class="ln" style="top:848px">36</div>
<div class="cl" style="top:848px"><span style="color:#A9B7C6">}</span></div>
<div class="a" style="left:1444px;top:750px;width:2px;height:32px;background:#BBBBBB"></div>
<svg class="a" style="left:506px;top:248px" width="13" height="13"><rect x="0.5" y="0.5" width="12" height="12" fill="#313335" stroke="#666" stroke-width="1"/><path d="M3 6.5H10M6.5 3V10" stroke="#888" stroke-width="1"/></svg>
<svg class="a" style="left:506px;top:407px" width="13" height="16"><path d="M0.5 0.5H12.5V10L6.5 15L0.5 10Z" fill="#313335" stroke="#666" stroke-width="1"/><path d="M3 6H10" stroke="#888" stroke-width="1"/></svg>
<svg class="a" style="left:506px;top:437px" width="13" height="16"><path d="M0.5 15.5H12.5V6L6.5 1L0.5 6Z" fill="#313335" stroke="#666" stroke-width="1"/><path d="M3 10H10" stroke="#888" stroke-width="1"/></svg>
<svg class="a" style="left:506px;top:503px" width="13" height="16"><path d="M0.5 0.5H12.5V10L6.5 15L0.5 10Z" fill="#313335" stroke="#666" stroke-width="1"/><path d="M3 6H10" stroke="#888" stroke-width="1"/></svg>
<svg class="a" style="left:506px;top:565px" width="13" height="16"><path d="M0.5 15.5H12.5V6L6.5 1L0.5 6Z" fill="#313335" stroke="#666" stroke-width="1"/><path d="M3 10H10" stroke="#888" stroke-width="1"/></svg>
<svg class="a" style="left:506px;top:631px" width="13" height="16"><path d="M0.5 0.5H12.5V10L6.5 15L0.5 10Z" fill="#313335" stroke="#666" stroke-width="1"/><path d="M3 6H10" stroke="#888" stroke-width="1"/></svg>
<svg class="a" style="left:506px;top:693px" width="13" height="16"><path d="M0.5 15.5H12.5V6L6.5 1L0.5 6Z" fill="#313335" stroke="#666" stroke-width="1"/><path d="M3 10H10" stroke="#888" stroke-width="1"/></svg>
<svg class="a" style="left:506px;top:760px" width="13" height="13"><rect x="0.5" y="0.5" width="12" height="12" fill="#313335" stroke="#666" stroke-width="1"/><path d="M3 6.5H10M6.5 3V10" stroke="#888" stroke-width="1"/></svg>
<svg class="a" style="left:506px;top:824px" width="13" height="13"><rect x="0.5" y="0.5" width="12" height="12" fill="#313335" stroke="#666" stroke-width="1"/><path d="M3 6.5H10M6.5 3V10" stroke="#888" stroke-width="1"/></svg>
<div class="a" style="left:1894px;top:70px;width:26px;height:917px;background:#3C3F41;border-left:1px solid #323232"></div>
<div class="a" style="left:1899px;top:76px;font-size:19px;line-height:22px;font-weight:bold;font-style:italic;color:#AFB1B3">m</div>
<div class="a" style="left:1916px;top:101px;transform-origin:0 0;transform:rotate(90deg);font-size:14px;line-height:16px;color:#BBBBBB">Maven</div>
<svg class="a" style="left:1899px;top:167px" width="16" height="16"><ellipse cx="8" cy="3" rx="7" ry="2.5" fill="#AFB1B3"/><path d="M1 5.5a7 2.5 0 0 0 14 0v2a7 2.5 0 0 1-14 0zM1 9.5a7 2.5 0 0 0 14 0v2a7 2.5 0 0 1-14 0z" fill="#AFB1B3"/></svg>
<div class="a" style="left:1916px;top:188px;transform-origin:0 0;transform:rotate(90deg);font-size:14px;line-height:16px;color:#BBBBBB">Database</div>
<svg class="a" style="left:1899px;top:272px" width="17" height="17"><circle cx="7.75" cy="8.1" r="6.9" fill="#AFB1B3"/><path d="M2.5 2.2L10.5 10.2" stroke="#3C3F41" stroke-width="1.4"/><path d="M5.8 12.2L9.3 15.5L15.5 9.3" fill="none" stroke="#3C3F41" stroke-width="4"/><path d="M6.3 12.5L9.3 15.2L15.2 9.4" fill="none" stroke="#AFB1B3" stroke-width="2"/></svg>
<div class="a" style="left:1916px;top:291px;transform-origin:0 0;transform:rotate(90deg);font-size:14px;line-height:16px;color:#BBBBBB">Bean Validation</div>
<div class="a" style="left:444px;top:878px;width:1450px;height:109px;background:#3C3F41"></div>
<div class="a" style="left:446px;top:886px;width:1445px;height:64px;border:1px solid #5B5D5F"></div>
<div class="a" style="left:450px;top:879px;padding:0 3px;line-height:18px;background:#3C3F41;color:#BBBBBB">JarEditor Tools</div>
<svg class="a" style="left:1166px;top:914px" width="19" height="17"><path d="M5.5 1.5L1.5 5.5L5.5 9.5" fill="none" stroke="#8A8C8E" stroke-width="1.4"/><path d="M1.5 5.5H11.5A5 5 0 0 1 11.5 15.5H6" fill="none" stroke="#8A8C8E" stroke-width="1.4"/></svg>
<svg class="a" style="left:1198px;top:912px" width="22" height="22"><path d="M18.6 3.2L13.2 9" stroke="#6E6E6E" stroke-width="2.4"/><path d="M14 8.6L10.2 12.4" stroke="#6E6E6E" stroke-width="4.6"/><path d="M2 11.5L11.6 14.2L10.5 20C7 20.5 3.5 17 2 11.5Z" fill="#6E6E6E"/><path d="M8.2 11.2L11.6 14.6" stroke="#3C3F41" stroke-width="0.9"/></svg>
<svg class="a" style="left:1234px;top:913px" width="18" height="18"><circle cx="7.9" cy="8.5" r="5.9" fill="none" stroke="#8A98A2" stroke-width="1.4"/><path d="M12 12.6L15.8 16.3" stroke="#8A98A2" stroke-width="1.7"/></svg>
<svg class="a" style="left:1266px;top:911px" width="26" height="24"><path d="M3 18.5L9 12" stroke="#4A86C6" stroke-width="2.8" stroke-linecap="round"/><path d="M8.5 12.5L12.3 8.3" stroke="#CC7A4E" stroke-width="2.6"/><path d="M9.5 6C11 4.3 13 4 16 4.5L19 7.5L16.5 10.5L13.5 8.5C12 7.5 10.5 6.8 9.5 6Z" fill="#7A7A7A"/><path d="M17.5 9L19.8 6.6L22.5 9.3L20.2 11.8Z" fill="#7A7A7A"/><path d="M14.5 18.8H22L18.25 22.8Z" fill="#DDDDDD"/></svg>
<div class="a" style="left:1317px;top:908px;line-height:30px;color:#589DF6">SDK</div>
<div class="a" style="left:1354px;top:907px;width:112px;height:31px;border:1px solid #5E6060;border-radius:3px"></div>
<div class="a" style="left:1360px;top:908px;line-height:30px;color:#BBBBBB">SDK …ault</div>
<svg class="a" style="left:1446px;top:919px" width="14" height="9"><path d="M1 1H13L7 7Z" fill="#AFB1B3"/></svg>
<div class="a" style="left:1475px;top:908px;line-height:30px;color:#BBBBBB">Target</div>
<div class="a" style="left:1527px;top:907px;width:52px;height:31px;border:1px solid #5E6060;border-radius:3px"></div>
<div class="a" style="left:1533px;top:908px;line-height:30px;color:#BBBBBB">8</div>
<svg class="a" style="left:1558px;top:919px" width="14" height="9"><path d="M1 1H13L7 7Z" fill="#AFB1B3"/></svg>
<div class="a" style="left:1591px;top:914px;width:18px;height:18px;border:1px solid #6B6B6B;border-radius:2px;background:#43494A"></div>
<svg class="a" style="left:1593px;top:916px" width="14" height="14"><path d="M2.5 7L5.5 11L11.5 2.5" fill="none" stroke="#BBBBBB" stroke-width="1.6"/></svg>
<div class="a" style="left:1617px;top:908px;line-height:30px;color:#BBBBBB">Compile</div>
<div class="a" style="left:1681px;top:907px;width:91px;height:32px;border:1px solid #5E6060;border-radius:3px;background:#4C5052;text-align:center;line-height:30px;color:#BBBBBB">Save</div>
<div class="a" style="left:1784px;top:907px;width:95px;height:32px;border:1px solid #5E6060;border-radius:3px;background:#4C5052;text-align:center;line-height:30px;color:#BBBBBB">Build Jar</div>
<div class="a" style="left:470px;top:955px;line-height:30px;color:#BBBBBB">Text</div>
<div class="a" style="left:529px;top:955px;line-height:30px;color:#BBBBBB">Jar Editor</div>
<div class="a" style="left:513px;top:983px;width:95px;height:4px;background:#4A88C7"></div>
<div class="a" style="left:28px;top:975px;width:241px;height:11px;background:rgba(128,128,128,0.5)"></div>
<div class="a" style="left:0;top:987px;width:1920px;height:27px;background:#3C3F41;border-top:1px solid #323232"></div>
<div class="a" style="left:0;top:1014px;width:1920px;height:26px;background:#3C3F41;border-top:1px solid #4B4D4F"></div>
<svg class="a" style="left:38px;top:993px" width="15" height="15"><path d="M2 3V14M2 9H8V4M5 6L8 3L11 6" fill="none" stroke="#AFB1B3" stroke-width="2"/></svg>
<div class="a" style="left:57px;top:988px;line-height:26px;font-size:14px;letter-spacing:0px;color:#BBBBBB">Git</div>
<svg class="a" style="left:100px;top:994px" width="14" height="13"><path d="M0 1.5H2.5M4 1.5H14M0 6.5H2.5M4 6.5H14M0 11.5H2.5M4 11.5H14" stroke="#AFB1B3" stroke-width="2.2"/></svg>
<div class="a" style="left:118px;top:988px;line-height:26px;font-size:14px;letter-spacing:0px;color:#BBBBBB">TODO</div>
<svg class="a" style="left:183px;top:993px" width="15" height="15"><circle cx="7.5" cy="7.5" r="7" fill="#AFB1B3"/><path d="M7.5 3V8.5" stroke="#3C3F41" stroke-width="2.2"/><circle cx="7.5" cy="11.3" r="1.2" fill="#3C3F41"/></svg>
<div class="a" style="left:202px;top:988px;line-height:26px;font-size:14px;letter-spacing:0px;color:#BBBBBB">Problems</div>
<svg class="a" style="left:283px;top:992px" width="16" height="17"><path d="M7 13A6 6 0 1 1 13 7" fill="none" stroke="#AFB1B3" stroke-width="1.6"/><path d="M7 4V7.5L9 9" fill="none" stroke="#AFB1B3" stroke-width="1.4"/><path d="M8 8L15 12L8 16Z" fill="#AFB1B3"/></svg>
<div class="a" style="left:303px;top:988px;line-height:26px;font-size:14px;letter-spacing:0px;color:#BBBBBB">Profiler</div>
<svg class="a" style="left:374px;top:992px" width="16" height="17"><ellipse cx="7" cy="3" rx="6.5" ry="2.5" fill="#AFB1B3"/><path d="M0.5 5a6.5 2.5 0 0 0 13 0v2a6.5 2.5 0 0 1-13 0zM0.5 9a6.5 2.5 0 0 0 8 2.4v2a6.5 2.5 0 0 1-8-2.4z" fill="#AFB1B3"/><path d="M8 12L10.5 14.5L15 9.5" fill="none" stroke="#AFB1B3" stroke-width="1.7"/></svg>
<div class="a" style="left:394px;top:988px;line-height:26px;font-size:14px;letter-spacing:-0.33px;color:#BBBBBB">Database Changes</div>
<svg class="a" style="left:537px;top:994px" width="15" height="14"><rect x="0" y="0" width="15" height="14" fill="#AFB1B3"/><path d="M3 3.5L6 6L3 8.5M7 10.5H11" fill="none" stroke="#3C3F41" stroke-width="1.3"/></svg>
<div class="a" style="left:556px;top:988px;line-height:26px;font-size:14px;letter-spacing:0px;color:#BBBBBB">Terminal</div>
<svg class="a" style="left:637px;top:993px" width="16" height="16"><path d="M0 0H12V3H3V12H0Z" fill="#AFB1B3"/><rect x="4" y="4" width="12" height="12" fill="#AFB1B3"/><text x="5" y="14" font-size="7.5" font-weight="bold" fill="#3C3F41" font-family="Liberation Sans">EE</text></svg>
<div class="a" style="left:656px;top:988px;line-height:26px;font-size:14px;letter-spacing:-0.36px;color:#BBBBBB">Java Enterprise</div>
<svg class="a" style="left:774px;top:993px" width="17" height="15"><path d="M1 13C0 7 5 2 16 1C15 9 10 14 3 13Z" fill="#AFB1B3"/><path d="M2 14C5 9 8 7 12 5" stroke="#3C3F41" stroke-width="1.2" fill="none"/></svg>
<div class="a" style="left:794px;top:988px;line-height:26px;font-size:14px;letter-spacing:0px;color:#BBBBBB">Spring</div>
<svg class="a" style="left:1800px;top:993px" width="16" height="16"><circle cx="8" cy="8" r="7.5" fill="#499C54"/><text x="8" y="12.5" font-size="11" font-weight="bold" text-anchor="middle" fill="#FFFFFF" font-family="Liberation Sans">1</text></svg>
<div class="a" style="left:1820px;top:988px;line-height:26px;font-size:14px;letter-spacing:0px;color:#BBBBBB">Event Log</div>
<svg class="a" style="left:8px;top:1019px" width="16" height="16"><rect x="4.5" y="1.5" width="10" height="10" fill="none" stroke="#AFB1B3" stroke-width="1.3"/><path d="M1.5 4.5V14.5H11.5" fill="none" stroke="#AFB1B3" stroke-width="1.3"/></svg>
<div class="a" style="left:33px;top:1014px;line-height:26px;font-size:15.5px;letter-spacing:-0.065px;color:#BBBBBB">Download pre-built shared indexes: Pre-built JDK shared indexes reduce the indexing time and CPU load // Always download // Download once // Don't show again // Configure… (3 minutes ago)</div>
<div class="a" style="left:1636px;top:1014px;line-height:26px;font-size:15px;letter-spacing:-0.13px;color:#BBBBBB">30:24 (26 chars, 1 line break)</div>
<svg class="a" style="left:1843px;top:1019px" width="14" height="18"><path d="M3 2V16M3 12C3 8 11 9 11 4" fill="none" stroke="#AFB1B3" stroke-width="1.8"/><circle cx="3" cy="3" r="2" fill="#AFB1B3"/><circle cx="11" cy="3" r="2" fill="#AFB1B3"/><circle cx="3" cy="15" r="2" fill="#AFB1B3"/></svg>
<div class="a" style="left:1864px;top:1014px;line-height:26px;font-size:15px;color:#BBBBBB">master</div>
<div class="a" style="left:0;top:1040px;width:1920px;height:8px;background:linear-gradient(90deg,#1F3A42 0%,#1E3540 40%,#1A2A3E 100%)"></div>
<div class="a" style="left:1178px;top:1040px;width:160px;height:8px;background:#3B4E5C"></div>
<div class="a" style="left:1807px;top:1045px;font-size:12px;line-height:12px;color:#FFFFFF">22:22:22</div>
<div class="a" style="left:1915px;top:1040px;width:1px;height:8px;background:#7A808A"></div>
</body></html>
